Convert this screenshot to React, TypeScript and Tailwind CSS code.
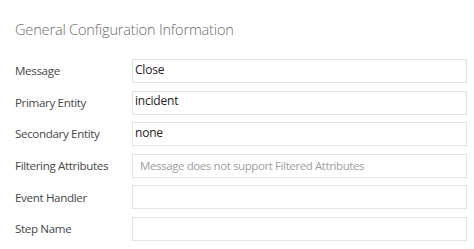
import React from "react";

const rows: { label: string; value?: string; placeholder?: string }[] = [
  { label: "Message", value: "Close" },
  { label: "Primary Entity", value: "incident" },
  { label: "Secondary Entity", value: "none" },
  { label: "Filtering Attributes", placeholder: "Message does not support Filtered Attributes" },
  { label: "Event Handler" },
  { label: "Step Name" },
];

export default function App() {
  return (
    <div
      className="w-[474px] h-[249px] bg-white overflow-hidden pl-[15px] pr-[7px]"
      style={{ fontFamily: '"Open Sans", "Noto Sans", sans-serif' }}
    >
      <div className="pt-[19px] h-[59px] text-[14.6px] font-light text-[#6b6b6b] tracking-[-0.2px]">
        General Configuration Information
      </div>
      <div className="flex flex-col gap-[7.6px]">
        {rows.map((r) => (
          <div key={r.label} className="flex items-center h-[24px]">
            <div className="w-[117px] text-[11.6px] text-[#474747] tracking-[-0.35px]">{r.label}</div>
            <div className="flex-1 h-[24px] border border-[#e3e3e3] flex items-center">
              {r.value ? (
                <span className="pl-[2px] text-[12px] text-[#222] -mt-[3px] tracking-[-0.2px]">{r.value}</span>
              ) : r.placeholder ? (
                <span className="pl-[7px] text-[11.5px] text-[#a0a0a0] tracking-[-0.4px]">{r.placeholder}</span>
              ) : null}
            </div>
          </div>
        ))}
      </div>
    </div>
  );
}
